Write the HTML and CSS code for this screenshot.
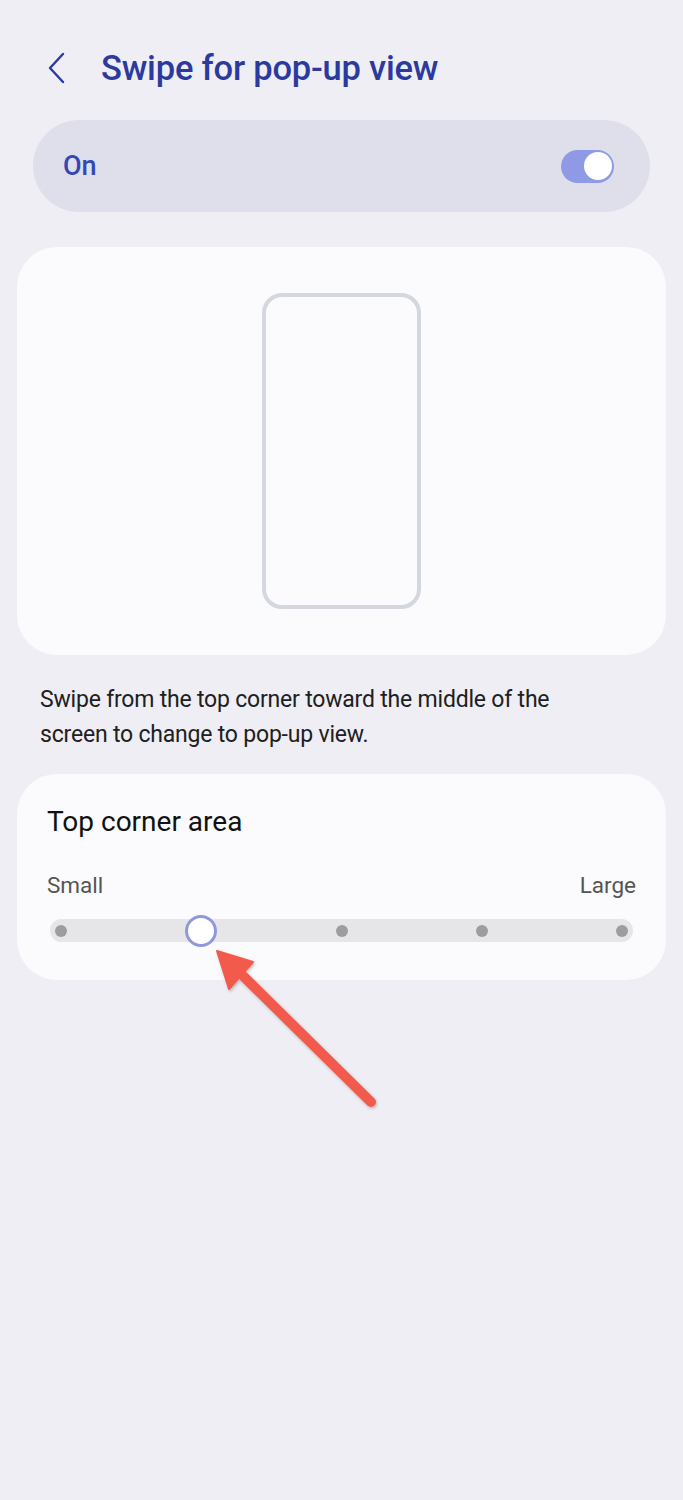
FILE: index.html
```html
<!DOCTYPE html>
<html lang="en">
<head>
    <meta charset="UTF-8">
    <meta name="viewport" content="width=device-width, initial-scale=1.0">
    <title>Swipe for pop-up view</title>
    <link rel="stylesheet" href="styles.css">
</head>
<body>
    <div class="screen">
        <header class="header">
            <svg class="back" width="20" height="32" viewBox="0 0 20 32">
                <path d="M16 2 L3 16 L16 30" fill="none" stroke="#2b3a9e" stroke-width="2.4" stroke-linecap="round" stroke-linejoin="round"/>
            </svg>
            <h1 class="title">Swipe for pop-up view</h1>
        </header>

        <div class="master">
            <span class="master-label">On</span>
            <div class="toggle"><div class="toggle-thumb"></div></div>
        </div>

        <div class="card preview">
            <div class="phone"></div>
        </div>

        <p class="desc">Swipe from the top corner toward the middle of the screen to change to pop-up view.</p>

        <div class="card area">
            <div class="area-title">Top corner area</div>
            <div class="range-labels">
                <span>Small</span>
                <span>Large</span>
            </div>
            <div class="slider">
                <span class="stop"><span class="dot"></span></span>
                <span class="stop"><span class="thumb"></span></span>
                <span class="stop"><span class="dot"></span></span>
                <span class="stop"><span class="dot"></span></span>
                <span class="stop"><span class="dot"></span></span>
            </div>
        </div>

        <!-- annotation arrow -->
        <svg class="arrow" width="683" height="1500" viewBox="0 0 683 1500">
            <defs>
                <filter id="sh" x="-20%" y="-20%" width="140%" height="140%">
                    <feDropShadow dx="1" dy="1.5" stdDeviation="1.5" flood-color="#000" flood-opacity="0.25"/>
                </filter>
            </defs>
            <g filter="url(#sh)" fill="#f25a4b" stroke="#f25a4b">
                <line x1="371" y1="1102" x2="234" y2="967" stroke-width="10" stroke-linecap="round"/>
                <polygon points="217,951 253,962 229,989" stroke-width="2" stroke-linejoin="round"/>
            </g>
        </svg>
    </div>
</body>
</html>
```

FILE: styles.css
```css
html, body {
    margin: 0;
    padding: 0;
}

body {
    background-color: #efeef4;
    font-family: Roboto, "Noto Sans", sans-serif;
    color: #1e1e1e;
}

.screen {
    position: relative;
    width: 683px;
    height: 1500px;
    overflow: hidden;
}

.header {
    display: flex;
    align-items: center;
    height: 68px;
    padding: 34px 0 0 47px;
    gap: 34px;
}

.back {
    display: block;
}

.title {
    margin: 0;
    font-size: 34.5px;
    font-weight: 500;
    color: #2b3a9e;
    letter-spacing: -0.2px;
}

.master {
    display: flex;
    align-items: center;
    justify-content: space-between;
    margin: 18px 33px 0;
    height: 92px;
    padding: 0 36px 0 30px;
    background: #dfdfec;
    border-radius: 46px;
}

.master-label {
    font-size: 27px;
    font-weight: 500;
    color: #3447b8;
}

.toggle {
    display: flex;
    align-items: center;
    justify-content: flex-end;
    width: 53px;
    height: 33px;
    padding: 0 2px;
    box-sizing: border-box;
    background: #8e9ae6;
    border-radius: 17px;
}

.toggle-thumb {
    width: 28px;
    height: 28px;
    border-radius: 50%;
    background: #fff;
}

.card {
    margin: 0 17px;
    background: #fbfbfd;
    border-radius: 40px;
}

.preview {
    display: flex;
    justify-content: center;
    align-items: center;
    margin-top: 35px;
    height: 408px;
}

.phone {
    width: 151px;
    height: 308px;
    border: 4px solid #d4d8de;
    border-radius: 20px;
}

.desc {
    margin: 27px 83px 0 40px;
    font-size: 23px;
    line-height: 35px;
    letter-spacing: -0.2px;
    color: #202020;
}

.area {
    margin-top: 22px;
    padding: 31px 30px 38px;
}

.area-title {
    font-size: 28px;
    line-height: 34px;
    color: #111;
}

.range-labels {
    display: flex;
    justify-content: space-between;
    margin-top: 33px;
    font-size: 22.5px;
    line-height: 26px;
    color: #555;
}

.slider {
    display: flex;
    align-items: center;
    justify-content: space-between;
    margin: 21px 3px 0;
    height: 23px;
    padding: 0 11px;
    background: #e6e6e8;
    border-radius: 12px;
}

.stop {
    display: flex;
    justify-content: center;
    align-items: center;
    width: 0;
    height: 23px;
}

.dot {
    flex: none;
    width: 12px;
    height: 12px;
    border-radius: 50%;
    background: #9d9d9f;
}

.thumb {
    flex: none;
    width: 26px;
    height: 26px;
    border: 3px solid #8e98dc;
    border-radius: 50%;
    background: #fff;
}

.arrow {
    position: absolute;
    top: 0;
    left: 0;
    pointer-events: none;
}
```
